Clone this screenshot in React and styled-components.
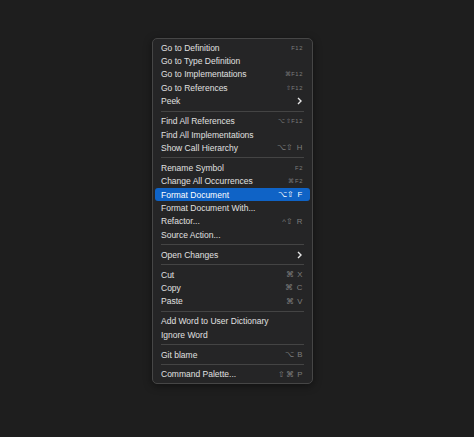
import React from "react";
import styled, { createGlobalStyle } from "styled-components";

const GlobalStyle = createGlobalStyle`
  html, body {
    margin: 0;
    padding: 0;
    background: #1e1e1e;
  }
  body {
    width: 474px;
    height: 437px;
    overflow: hidden;
    font-family: "Liberation Sans", Arial, sans-serif;
  }
`;

const Page = styled.div`
  display: flex;
  justify-content: flex-start;
  padding: 38px 0 0 152px;
`;

const Menu = styled.div`
  width: 161px;
  box-sizing: border-box;
  padding: 2px 2px;
  background: #252526;
  border: 1px solid #464646;
  border-radius: 5px;
  box-shadow: 0 2px 8px rgba(0, 0, 0, 0.45);
  display: flex;
  flex-direction: column;
`;

const Row = styled.div`
  height: 13.4px;
  display: flex;
  align-items: center;
  justify-content: space-between;
  padding: 0 7px 0 6px;
  border-radius: 3px;
  background: ${(p) => (p.$active ? "#0f63c6" : "transparent")};
  color: ${(p) => (p.$active ? "#ffffff" : "#e0e0e0")};
`;

const Label = styled.span`
  font-size: 8.5px;
  white-space: nowrap;
`;

const Keys = styled.span`
  font-size: ${(p) => (p.$small ? "5.8px" : "7.8px")};
  color: ${(p) => (p.$active ? "#ffffff" : "#7d7d7d")};
  letter-spacing: 0.6px;
  white-space: nowrap;
`;

const Sep = styled.div`
  height: 1px;
  margin: 2.75px 6px;
  background: #444444;
`;

const Chevron = () => (
  <svg width="7" height="8" viewBox="0 0 7 8">
    <path d="M2 1 L5 4 L2 7" fill="none" stroke="#e6e6e6" strokeWidth="1.4" />
  </svg>
);

const groups = [
  [
    { label: "Go to Definition", keys: "F12", small: true },
    { label: "Go to Type Definition" },
    { label: "Go to Implementations", keys: "⌘F12", small: true },
    { label: "Go to References", keys: "⇧F12", small: true },
    { label: "Peek", sub: true },
  ],
  [
    { label: "Find All References", keys: "⌥⇧F12", small: true },
    { label: "Find All Implementations" },
    { label: "Show Call Hierarchy", keys: "⌥⇧ H" },
  ],
  [
    { label: "Rename Symbol", keys: "F2", small: true },
    { label: "Change All Occurrences", keys: "⌘F2", small: true },
    { label: "Format Document", keys: "⌥⇧ F", active: true },
    { label: "Format Document With..." },
    { label: "Refactor...", keys: "^⇧ R" },
    { label: "Source Action..." },
  ],
  [{ label: "Open Changes", sub: true }],
  [
    { label: "Cut", keys: "⌘ X" },
    { label: "Copy", keys: "⌘ C" },
    { label: "Paste", keys: "⌘ V" },
  ],
  [{ label: "Add Word to User Dictionary" }, { label: "Ignore Word" }],
  [{ label: "Git blame", keys: "⌥ B" }],
  [{ label: "Command Palette...", keys: "⇧⌘ P" }],
];

const App = () => {
  return (
    <>
      <GlobalStyle />
      <Page>
        <Menu>
          {groups.map((items, gi) => (
            <React.Fragment key={gi}>
              {gi > 0 && <Sep />}
              {items.map((it) => (
                <Row key={it.label} $active={it.active}>
                  <Label>{it.label}</Label>
                  {it.keys && (
                    <Keys $small={it.small} $active={it.active}>
                      {it.keys}
                    </Keys>
                  )}
                  {it.sub && <Chevron />}
                </Row>
              ))}
            </React.Fragment>
          ))}
        </Menu>
      </Page>
    </>
  );
};

export default App;
